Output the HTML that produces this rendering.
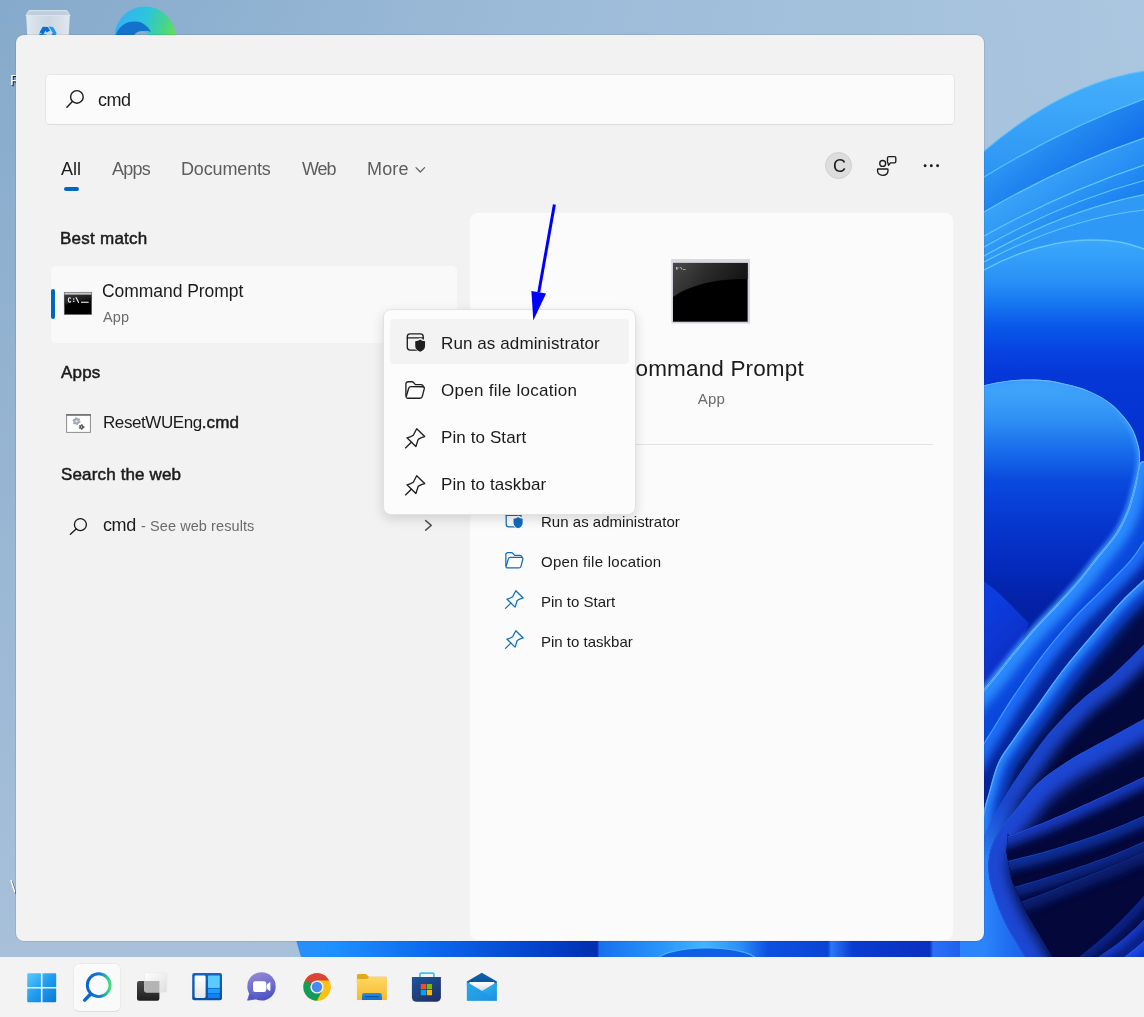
<!DOCTYPE html>
<html>
<head>
<meta charset="utf-8">
<title>Search</title>
<style>
html,body{margin:0;padding:0;}
body{width:1144px;height:1017px;overflow:hidden;position:relative;background:#a4bcd6;font-family:"Liberation Sans",sans-serif;}
.abs{position:absolute;}
svg{position:absolute;overflow:visible;}
.t{position:absolute;white-space:nowrap;line-height:1;color:#1b1b1b;will-change:transform;}
.sb{-webkit-text-stroke:0.5px #1b1b1b;}
#panel{position:absolute;left:16px;top:35px;width:968px;height:906px;background:#f2f2f2;border-radius:8px;box-shadow:0 0 0 1px rgba(0,0,0,0.08);}
#search{position:absolute;left:45.4px;top:74.4px;width:907.6px;height:48.4px;background:#fbfbfb;border:1px solid #e6e6e6;border-bottom-color:#dcdcdc;border-radius:5px;}
#sel{position:absolute;left:51px;top:266px;width:406px;height:77px;background:#f9f9f9;border-radius:5px;}
#rpane{position:absolute;left:470px;top:213px;width:483px;height:727.4px;background:#fbfbfb;border-radius:8px;}
#menu{position:absolute;left:383.2px;top:309px;width:251.2px;height:204.2px;background:#fcfcfc;border:1px solid #e2e2e2;border-radius:8px;box-shadow:0 4px 12px rgba(0,0,0,0.14);}
#hov{position:absolute;left:390px;top:319px;width:239.3px;height:44.8px;background:#f3f3f3;border-radius:4px;}
#taskbar{position:absolute;left:0;top:957px;width:1144px;height:60px;background:#f3f3f3;}
#sbtn{position:absolute;left:72.8px;top:962.5px;width:46.2px;height:47px;background:#fafafa;border:1px solid #ebebeb;border-bottom-color:#dedede;border-radius:6px;}

</style>
</head>
<body>
<svg id="wall" width="1144" height="957" viewBox="0 0 1144 957" style="left:0;top:0;overflow:hidden">
<defs>
<filter id="b1" filterUnits="userSpaceOnUse" x="900" y="0" width="300" height="1000"><feGaussianBlur stdDeviation="0.7"/></filter>
<filter id="b2" filterUnits="userSpaceOnUse" x="900" y="0" width="300" height="1000"><feGaussianBlur stdDeviation="2"/></filter>
<filter id="b3" filterUnits="userSpaceOnUse" x="900" y="0" width="300" height="1000"><feGaussianBlur stdDeviation="3"/></filter>
<filter id="b4" filterUnits="userSpaceOnUse" x="900" y="0" width="300" height="1000"><feGaussianBlur stdDeviation="4"/></filter>
<filter id="b5" filterUnits="userSpaceOnUse" x="900" y="0" width="300" height="1000"><feGaussianBlur stdDeviation="5"/></filter>
<filter id="b6" filterUnits="userSpaceOnUse" x="900" y="0" width="300" height="1000"><feGaussianBlur stdDeviation="6"/></filter>
<filter id="b7" filterUnits="userSpaceOnUse" x="900" y="0" width="300" height="1000"><feGaussianBlur stdDeviation="7"/></filter>
<filter id="b8" filterUnits="userSpaceOnUse" x="900" y="0" width="300" height="1000"><feGaussianBlur stdDeviation="8"/></filter>
<filter id="b9" filterUnits="userSpaceOnUse" x="900" y="0" width="300" height="1000"><feGaussianBlur stdDeviation="9"/></filter>
<filter id="b10" filterUnits="userSpaceOnUse" x="900" y="0" width="300" height="1000"><feGaussianBlur stdDeviation="10"/></filter>
<filter id="b11" filterUnits="userSpaceOnUse" x="900" y="0" width="300" height="1000"><feGaussianBlur stdDeviation="11"/></filter>
<filter id="b12" filterUnits="userSpaceOnUse" x="900" y="0" width="300" height="1000"><feGaussianBlur stdDeviation="12"/></filter>
<linearGradient id="bgH" x1="0" y1="0" x2="1" y2="0"><stop offset="0" stop-color="#86aacb"/><stop offset="0.5" stop-color="#9dbcd9"/><stop offset="1" stop-color="#abc6df"/></linearGradient>
<linearGradient id="bgV" x1="0" y1="0" x2="0" y2="1"><stop offset="0" stop-color="#a8c0da" stop-opacity="0"/><stop offset="1" stop-color="#a8c0da" stop-opacity="1"/></linearGradient>
<linearGradient id="strip" x1="297" y1="0" x2="1000" y2="0" gradientUnits="userSpaceOnUse">
<stop offset="0" stop-color="#2a8ef8"/><stop offset="0.05" stop-color="#1e90ff"/><stop offset="0.2" stop-color="#0a66ec"/><stop offset="0.37" stop-color="#033cc4"/><stop offset="0.427" stop-color="#022fae"/><stop offset="0.43" stop-color="#1670ee"/><stop offset="0.52" stop-color="#2a96fa"/><stop offset="0.58" stop-color="#42b4ff"/><stop offset="0.63" stop-color="#2c90f8"/><stop offset="0.67" stop-color="#0d50e0"/><stop offset="0.755" stop-color="#0a44d4"/><stop offset="0.76" stop-color="#2a78f8"/><stop offset="0.79" stop-color="#0a3cd0"/><stop offset="0.9" stop-color="#0a30c0"/><stop offset="0.905" stop-color="#2a70f8"/><stop offset="1" stop-color="#1448dc"/></linearGradient>
<linearGradient id="p1" x1="0" y1="70" x2="0" y2="180" gradientUnits="userSpaceOnUse"><stop offset="0" stop-color="#46b0fb"/><stop offset="1" stop-color="#2a94f4"/></linearGradient>
<linearGradient id="p2" x1="1040" y1="120" x2="1100" y2="200" gradientUnits="userSpaceOnUse"><stop offset="0" stop-color="#2f9cf6"/><stop offset="1" stop-color="#0a60e6"/></linearGradient>
<linearGradient id="p3" x1="1040" y1="160" x2="1090" y2="230" gradientUnits="userSpaceOnUse"><stop offset="0" stop-color="#3ca8f9"/><stop offset="1" stop-color="#1c82f0"/></linearGradient>
<linearGradient id="p4" x1="1040" y1="190" x2="1080" y2="245" gradientUnits="userSpaceOnUse"><stop offset="0" stop-color="#36a2f8"/><stop offset="1" stop-color="#167cf0"/></linearGradient>
<linearGradient id="p8" x1="0" y1="240" x2="0" y2="640" gradientUnits="userSpaceOnUse"><stop offset="0" stop-color="#3aa8fb"/><stop offset="0.1" stop-color="#2a92f6"/><stop offset="0.155" stop-color="#1878f2"/><stop offset="0.215" stop-color="#0a58ea"/><stop offset="0.275" stop-color="#0644e2"/><stop offset="0.33" stop-color="#0538d8"/><stop offset="0.6" stop-color="#042ec8"/><stop offset="1" stop-color="#0324b0"/></linearGradient>
<linearGradient id="p9" x1="0" y1="380" x2="0" y2="680" gradientUnits="userSpaceOnUse"><stop offset="0" stop-color="#42a8fb"/><stop offset="0.067" stop-color="#3a9ef8"/><stop offset="0.133" stop-color="#2e90f4"/><stop offset="0.2" stop-color="#1f78ee"/><stop offset="0.267" stop-color="#1462e8"/><stop offset="0.333" stop-color="#0a4ade"/><stop offset="0.467" stop-color="#0638d0"/><stop offset="0.6" stop-color="#042cc0"/><stop offset="0.733" stop-color="#0322a8"/><stop offset="1" stop-color="#021a90"/></linearGradient>
<linearGradient id="tri" x1="984" y1="600" x2="1030" y2="640" gradientUnits="userSpaceOnUse"><stop offset="0" stop-color="#0f3ee0"/><stop offset="1" stop-color="#0830c6"/></linearGradient>
<linearGradient id="lbH" x1="984" y1="0" x2="1030" y2="0" gradientUnits="userSpaceOnUse"><stop offset="0" stop-color="#2c84fb"/><stop offset="0.5" stop-color="#2070f2"/><stop offset="1" stop-color="#1a5ce8"/></linearGradient>
<linearGradient id="lbV" x1="0" y1="800" x2="0" y2="860" gradientUnits="userSpaceOnUse"><stop offset="0" stop-color="#000"/><stop offset="1" stop-color="#fff"/></linearGradient>
<mask id="lbM" maskUnits="userSpaceOnUse" x="960" y="790" width="120" height="200"><rect x="960" y="790" width="120" height="200" fill="url(#lbV)"/></mask>
</defs>
<rect width="1144" height="957" fill="url(#bgH)"/>
<rect width="1144" height="957" fill="url(#bgV)"/>
<path d="M296,940 L1144,940 L1144,957 L301,957 Z" fill="url(#strip)"/>
<ellipse cx="707" cy="961" rx="50" ry="13" fill="#0f5ee4"/>
<ellipse cx="707" cy="961" rx="50" ry="13" fill="none" stroke="#52bcff" stroke-width="1.2" opacity="0.8"/>
<g>
<path d="M970,163 L984,151 Q1064,83 1144,71 L1170,68 L1170,300 L970,300 Z" fill="url(#p1)" stroke="#62c4ff" stroke-width="1.2"/>
<path d="M970,185 L984,177 Q1064,128 1144,99 L1170,90 L1170,300 L970,300 Z" fill="url(#p2)" stroke="#5cc0ff" stroke-width="1.2"/>
<path d="M970,220 L984,212 Q1064,165 1144,138 L1170,130 L1170,300 L970,300 Z" fill="url(#p3)" stroke="#62c6ff" stroke-width="1.2"/>
<path d="M970,244 L984,236 Q1064,191.5 1144,165 L1170,157 L1170,300 L970,300 Z" fill="url(#p4)" stroke="#62c6ff" stroke-width="1.2"/>
<path d="M970,255 L984,247 Q1064,201.7 1144,180.5 L1170,174 L1170,300 L970,300 Z" fill="url(#p4)" stroke="#62c6ff" stroke-width="1.2"/>
<path d="M970,264 L984,256 Q1064,210.6 1144,194.7 L1170,190 L1170,300 L970,300 Z" fill="#2f9af6" stroke="#62c6ff" stroke-width="1.2"/>
<path d="M970,270 L984,262 Q1064,219.4 1144,210 L1170,207 L1170,300 L970,300 Z" fill="#2e98f6" stroke="#62c6ff" stroke-width="1.2"/>
<path d="M965,282 L984,270 C1020,250 1060,240 1090,240 S1130,244 1144,249 L1170,258 L1170,720 L965,720 Z" fill="url(#p8)" stroke="#66c8ff" stroke-width="1.4"/>
</g>
<path d="M960,640 L1170,500 L1170,980 L960,980 Z" fill="#03083a"/>
<clipPath id="c1"><path d="M1185.0,446.0 C1181.2,447.7 1168.2,453.5 1162.0,456.0 C1155.8,458.5 1151.7,459.7 1148.0,461.0 C1144.3,462.3 1142.0,459.3 1139.8,463.6 C1137.6,467.9 1137.0,479.1 1135.0,487.0 C1133.0,494.9 1131.2,502.9 1128.0,510.8 C1124.8,518.7 1121.2,526.5 1116.0,534.4 C1110.8,542.3 1103.3,550.1 1097.0,558.0 C1090.7,565.9 1085.1,573.7 1078.4,581.6 C1071.7,589.5 1064.3,597.3 1057.0,605.2 C1049.7,613.1 1041.8,620.9 1034.7,628.8 C1027.7,636.7 1021.2,644.5 1014.7,652.4 C1008.2,660.3 1000.9,669.7 995.8,676.0 C990.7,682.3 989.1,684.0 984.0,690.0 C978.9,696.0 968.2,708.3 965.0,712.0 L960,980 L1165,980 Z"/></clipPath>
<g clip-path="url(#c1)">
<path d="M1185.0,446.0 C1181.2,447.7 1168.2,453.5 1162.0,456.0 C1155.8,458.5 1151.7,459.7 1148.0,461.0 C1144.3,462.3 1142.0,459.3 1139.8,463.6 C1137.6,467.9 1137.0,479.1 1135.0,487.0 C1133.0,494.9 1131.2,502.9 1128.0,510.8 C1124.8,518.7 1121.2,526.5 1116.0,534.4 C1110.8,542.3 1103.3,550.1 1097.0,558.0 C1090.7,565.9 1085.1,573.7 1078.4,581.6 C1071.7,589.5 1064.3,597.3 1057.0,605.2 C1049.7,613.1 1041.8,620.9 1034.7,628.8 C1027.7,636.7 1021.2,644.5 1014.7,652.4 C1008.2,660.3 1000.9,669.7 995.8,676.0 C990.7,682.3 989.1,684.0 984.0,690.0 C978.9,696.0 968.2,708.3 965.0,712.0 L960,980 L1165,980 Z" fill="#0a48dc"/>
<path d="M1185.0,446.0 C1181.2,447.7 1168.2,453.5 1162.0,456.0 C1155.8,458.5 1151.7,459.7 1148.0,461.0 C1144.3,462.3 1142.0,459.3 1139.8,463.6 C1137.6,467.9 1137.0,479.1 1135.0,487.0 C1133.0,494.9 1131.2,502.9 1128.0,510.8 C1124.8,518.7 1121.2,526.5 1116.0,534.4 C1110.8,542.3 1103.3,550.1 1097.0,558.0 C1090.7,565.9 1085.1,573.7 1078.4,581.6 C1071.7,589.5 1064.3,597.3 1057.0,605.2 C1049.7,613.1 1041.8,620.9 1034.7,628.8 C1027.7,636.7 1021.2,644.5 1014.7,652.4 C1008.2,660.3 1000.9,669.7 995.8,676.0 C990.7,682.3 989.1,684.0 984.0,690.0 C978.9,696.0 968.2,708.3 965.0,712.0" fill="none" stroke="#2a8aff" stroke-width="24" opacity="1" filter="url(#b5)"/>
<path d="M1185.0,446.0 C1181.2,447.7 1168.2,453.5 1162.0,456.0 C1155.8,458.5 1151.7,459.7 1148.0,461.0 C1144.3,462.3 1142.0,459.3 1139.8,463.6 C1137.6,467.9 1137.0,479.1 1135.0,487.0 C1133.0,494.9 1131.2,502.9 1128.0,510.8 C1124.8,518.7 1121.2,526.5 1116.0,534.4 C1110.8,542.3 1103.3,550.1 1097.0,558.0 C1090.7,565.9 1085.1,573.7 1078.4,581.6 C1071.7,589.5 1064.3,597.3 1057.0,605.2 C1049.7,613.1 1041.8,620.9 1034.7,628.8 C1027.7,636.7 1021.2,644.5 1014.7,652.4 C1008.2,660.3 1000.9,669.7 995.8,676.0 C990.7,682.3 989.1,684.0 984.0,690.0 C978.9,696.0 968.2,708.3 965.0,712.0" fill="none" stroke="#62b8ff" stroke-width="2.2" opacity="1"/>
</g>
<clipPath id="c2"><path d="M1175.0,505.0 C1172.5,508.0 1165.2,517.0 1160.0,523.0 C1154.8,529.0 1148.9,534.8 1144.0,541.0 C1139.1,547.2 1137.4,551.9 1130.4,560.0 C1123.4,568.1 1111.6,579.7 1101.9,589.5 C1092.2,599.3 1082.2,608.2 1072.4,619.0 C1062.6,629.8 1052.8,641.2 1043.0,654.0 C1033.2,666.8 1021.7,683.4 1013.5,695.6 C1005.3,707.8 998.7,719.1 993.8,727.0 C988.9,734.9 988.0,735.9 984.0,742.7 C980.0,749.5 972.3,763.8 970.0,768.0 L960,980 L1165,980 Z"/></clipPath>
<g clip-path="url(#c2)">
<path d="M1175.0,505.0 C1172.5,508.0 1165.2,517.0 1160.0,523.0 C1154.8,529.0 1148.9,534.8 1144.0,541.0 C1139.1,547.2 1137.4,551.9 1130.4,560.0 C1123.4,568.1 1111.6,579.7 1101.9,589.5 C1092.2,599.3 1082.2,608.2 1072.4,619.0 C1062.6,629.8 1052.8,641.2 1043.0,654.0 C1033.2,666.8 1021.7,683.4 1013.5,695.6 C1005.3,707.8 998.7,719.1 993.8,727.0 C988.9,734.9 988.0,735.9 984.0,742.7 C980.0,749.5 972.3,763.8 970.0,768.0 L960,980 L1165,980 Z" fill="#06249c"/>
<path d="M1175.0,505.0 C1172.5,508.0 1165.2,517.0 1160.0,523.0 C1154.8,529.0 1148.9,534.8 1144.0,541.0 C1139.1,547.2 1137.4,551.9 1130.4,560.0 C1123.4,568.1 1111.6,579.7 1101.9,589.5 C1092.2,599.3 1082.2,608.2 1072.4,619.0 C1062.6,629.8 1052.8,641.2 1043.0,654.0 C1033.2,666.8 1021.7,683.4 1013.5,695.6 C1005.3,707.8 998.7,719.1 993.8,727.0 C988.9,734.9 988.0,735.9 984.0,742.7 C980.0,749.5 972.3,763.8 970.0,768.0" fill="none" stroke="#1a6cf8" stroke-width="24" opacity="1" filter="url(#b5)"/>
<path d="M1175.0,505.0 C1172.5,508.0 1165.2,517.0 1160.0,523.0 C1154.8,529.0 1148.9,534.8 1144.0,541.0 C1139.1,547.2 1137.4,551.9 1130.4,560.0 C1123.4,568.1 1111.6,579.7 1101.9,589.5 C1092.2,599.3 1082.2,608.2 1072.4,619.0 C1062.6,629.8 1052.8,641.2 1043.0,654.0 C1033.2,666.8 1021.7,683.4 1013.5,695.6 C1005.3,707.8 998.7,719.1 993.8,727.0 C988.9,734.9 988.0,735.9 984.0,742.7 C980.0,749.5 972.3,763.8 970.0,768.0" fill="none" stroke="#3e9cff" stroke-width="2.2" opacity="1"/>
</g>
<clipPath id="c3"><path d="M1175.0,552.0 C1172.5,554.2 1165.2,560.4 1160.0,565.0 C1154.8,569.6 1150.4,573.6 1144.0,579.6 C1137.6,585.6 1130.2,591.8 1121.5,601.0 C1112.8,610.2 1101.8,623.2 1092.0,634.7 C1082.2,646.2 1072.4,657.2 1062.6,670.0 C1052.8,682.8 1041.4,699.5 1033.0,711.3 C1024.6,723.1 1017.8,732.4 1012.0,741.0 C1006.2,749.6 1001.8,754.5 998.0,763.0 C994.2,771.5 991.3,784.0 989.0,792.0 C986.7,800.0 985.5,803.0 984.0,811.0 C982.5,819.0 981.0,828.5 980.0,840.0 C979.0,851.5 978.3,865.0 978.0,880.0 C977.7,895.0 977.7,912.5 978.0,930.0 C978.3,947.5 979.7,975.8 980.0,985.0 L960,980 L1165,980 Z"/></clipPath>
<g clip-path="url(#c3)">
<path d="M1175.0,552.0 C1172.5,554.2 1165.2,560.4 1160.0,565.0 C1154.8,569.6 1150.4,573.6 1144.0,579.6 C1137.6,585.6 1130.2,591.8 1121.5,601.0 C1112.8,610.2 1101.8,623.2 1092.0,634.7 C1082.2,646.2 1072.4,657.2 1062.6,670.0 C1052.8,682.8 1041.4,699.5 1033.0,711.3 C1024.6,723.1 1017.8,732.4 1012.0,741.0 C1006.2,749.6 1001.8,754.5 998.0,763.0 C994.2,771.5 991.3,784.0 989.0,792.0 C986.7,800.0 985.5,803.0 984.0,811.0 C982.5,819.0 981.0,828.5 980.0,840.0 C979.0,851.5 978.3,865.0 978.0,880.0 C977.7,895.0 977.7,912.5 978.0,930.0 C978.3,947.5 979.7,975.8 980.0,985.0 L960,980 L1165,980 Z" fill="#030a44"/>
<path d="M1175.0,552.0 C1172.5,554.2 1165.2,560.4 1160.0,565.0 C1154.8,569.6 1150.4,573.6 1144.0,579.6 C1137.6,585.6 1130.2,591.8 1121.5,601.0 C1112.8,610.2 1101.8,623.2 1092.0,634.7 C1082.2,646.2 1072.4,657.2 1062.6,670.0 C1052.8,682.8 1041.4,699.5 1033.0,711.3 C1024.6,723.1 1017.8,732.4 1012.0,741.0 C1006.2,749.6 1001.8,754.5 998.0,763.0 C994.2,771.5 991.3,784.0 989.0,792.0 C986.7,800.0 985.5,803.0 984.0,811.0 C982.5,819.0 981.0,828.5 980.0,840.0 C979.0,851.5 978.3,865.0 978.0,880.0 C977.7,895.0 977.7,912.5 978.0,930.0 C978.3,947.5 979.7,975.8 980.0,985.0" fill="none" stroke="#1046d6" stroke-width="36" opacity="1" filter="url(#b6)"/>
<path d="M1175.0,552.0 C1172.5,554.2 1165.2,560.4 1160.0,565.0 C1154.8,569.6 1150.4,573.6 1144.0,579.6 C1137.6,585.6 1130.2,591.8 1121.5,601.0 C1112.8,610.2 1101.8,623.2 1092.0,634.7 C1082.2,646.2 1072.4,657.2 1062.6,670.0 C1052.8,682.8 1041.4,699.5 1033.0,711.3 C1024.6,723.1 1017.8,732.4 1012.0,741.0 C1006.2,749.6 1001.8,754.5 998.0,763.0 C994.2,771.5 991.3,784.0 989.0,792.0 C986.7,800.0 985.5,803.0 984.0,811.0 C982.5,819.0 981.0,828.5 980.0,840.0 C979.0,851.5 978.3,865.0 978.0,880.0 C977.7,895.0 977.7,912.5 978.0,930.0 C978.3,947.5 979.7,975.8 980.0,985.0" fill="none" stroke="#2a84fc" stroke-width="13" opacity="1" filter="url(#b3)"/>
<path d="M1175.0,552.0 C1172.5,554.2 1165.2,560.4 1160.0,565.0 C1154.8,569.6 1150.4,573.6 1144.0,579.6 C1137.6,585.6 1130.2,591.8 1121.5,601.0 C1112.8,610.2 1101.8,623.2 1092.0,634.7 C1082.2,646.2 1072.4,657.2 1062.6,670.0 C1052.8,682.8 1041.4,699.5 1033.0,711.3 C1024.6,723.1 1017.8,732.4 1012.0,741.0 C1006.2,749.6 1001.8,754.5 998.0,763.0 C994.2,771.5 991.3,784.0 989.0,792.0 C986.7,800.0 985.5,803.0 984.0,811.0 C982.5,819.0 981.0,828.5 980.0,840.0 C979.0,851.5 978.3,865.0 978.0,880.0 C977.7,895.0 977.7,912.5 978.0,930.0 C978.3,947.5 979.7,975.8 980.0,985.0" fill="none" stroke="#52acff" stroke-width="2.6" opacity="1"/>
</g>
<clipPath id="c4"><path d="M1175.0,615.0 C1172.5,617.5 1165.2,625.1 1160.0,630.0 C1154.8,634.9 1152.0,636.8 1144.0,644.5 C1136.0,652.2 1122.0,666.8 1111.7,676.0 C1101.4,685.2 1091.8,690.7 1082.0,699.5 C1072.2,708.3 1061.0,719.8 1052.8,729.0 C1044.6,738.2 1039.8,745.2 1033.0,754.5 C1026.2,763.8 1018.2,775.4 1012.0,785.0 C1005.8,794.6 1000.3,804.2 996.0,812.0 C991.7,819.8 989.3,825.3 986.0,832.0 C982.7,838.7 979.3,844.8 976.0,852.0 C972.7,859.2 967.7,871.2 966.0,875.0 L960,980 L1165,980 Z"/></clipPath>
<g clip-path="url(#c4)">
<path d="M1175.0,615.0 C1172.5,617.5 1165.2,625.1 1160.0,630.0 C1154.8,634.9 1152.0,636.8 1144.0,644.5 C1136.0,652.2 1122.0,666.8 1111.7,676.0 C1101.4,685.2 1091.8,690.7 1082.0,699.5 C1072.2,708.3 1061.0,719.8 1052.8,729.0 C1044.6,738.2 1039.8,745.2 1033.0,754.5 C1026.2,763.8 1018.2,775.4 1012.0,785.0 C1005.8,794.6 1000.3,804.2 996.0,812.0 C991.7,819.8 989.3,825.3 986.0,832.0 C982.7,838.7 979.3,844.8 976.0,852.0 C972.7,859.2 967.7,871.2 966.0,875.0 L960,980 L1165,980 Z" fill="#03083a"/>
<path d="M1175.0,615.0 C1172.5,617.5 1165.2,625.1 1160.0,630.0 C1154.8,634.9 1152.0,636.8 1144.0,644.5 C1136.0,652.2 1122.0,666.8 1111.7,676.0 C1101.4,685.2 1091.8,690.7 1082.0,699.5 C1072.2,708.3 1061.0,719.8 1052.8,729.0 C1044.6,738.2 1039.8,745.2 1033.0,754.5 C1026.2,763.8 1018.2,775.4 1012.0,785.0 C1005.8,794.6 1000.3,804.2 996.0,812.0 C991.7,819.8 989.3,825.3 986.0,832.0 C982.7,838.7 979.3,844.8 976.0,852.0 C972.7,859.2 967.7,871.2 966.0,875.0" fill="none" stroke="#1a48d4" stroke-width="32" opacity="0.95" filter="url(#b6)"/>
<path d="M1175.0,615.0 C1172.5,617.5 1165.2,625.1 1160.0,630.0 C1154.8,634.9 1152.0,636.8 1144.0,644.5 C1136.0,652.2 1122.0,666.8 1111.7,676.0 C1101.4,685.2 1091.8,690.7 1082.0,699.5 C1072.2,708.3 1061.0,719.8 1052.8,729.0 C1044.6,738.2 1039.8,745.2 1033.0,754.5 C1026.2,763.8 1018.2,775.4 1012.0,785.0 C1005.8,794.6 1000.3,804.2 996.0,812.0 C991.7,819.8 989.3,825.3 986.0,832.0 C982.7,838.7 979.3,844.8 976.0,852.0 C972.7,859.2 967.7,871.2 966.0,875.0" fill="none" stroke="#2050d8" stroke-width="1.6" opacity="0.7"/>
</g>
<rect x="960" y="790" width="100" height="200" fill="url(#lbH)" mask="url(#lbM)"/>
<clipPath id="c5"><path d="M1175.0,706.0 C1172.5,707.0 1165.2,709.8 1160.0,712.0 C1154.8,714.2 1152.0,714.9 1144.0,719.0 C1136.0,723.1 1124.0,730.0 1111.7,736.8 C1099.5,743.5 1082.8,751.8 1070.5,759.5 C1058.2,767.2 1047.0,774.8 1038.0,783.0 C1029.0,791.2 1022.7,801.2 1016.4,809.0 C1010.1,816.8 1004.3,823.2 1000.0,830.0 C995.7,836.8 992.4,843.3 990.5,850.0 C988.6,856.7 988.1,863.2 988.5,870.0 C988.9,876.8 989.8,882.0 992.6,891.0 C995.5,900.0 1000.2,912.8 1005.6,923.8 C1011.0,934.8 1019.9,947.6 1025.0,957.0 C1030.1,966.4 1034.2,976.2 1036.0,980.0 L1036,985 L1170,985 Z"/></clipPath>
<g clip-path="url(#c5)">
<path d="M1175.0,706.0 C1172.5,707.0 1165.2,709.8 1160.0,712.0 C1154.8,714.2 1152.0,714.9 1144.0,719.0 C1136.0,723.1 1124.0,730.0 1111.7,736.8 C1099.5,743.5 1082.8,751.8 1070.5,759.5 C1058.2,767.2 1047.0,774.8 1038.0,783.0 C1029.0,791.2 1022.7,801.2 1016.4,809.0 C1010.1,816.8 1004.3,823.2 1000.0,830.0 C995.7,836.8 992.4,843.3 990.5,850.0 C988.6,856.7 988.1,863.2 988.5,870.0 C988.9,876.8 989.8,882.0 992.6,891.0 C995.5,900.0 1000.2,912.8 1005.6,923.8 C1011.0,934.8 1019.9,947.6 1025.0,957.0 C1030.1,966.4 1034.2,976.2 1036.0,980.0 L1036,985 L1170,985 Z" fill="#03083a"/>
<path d="M1175.0,706.0 C1172.5,707.0 1165.2,709.8 1160.0,712.0 C1154.8,714.2 1152.0,714.9 1144.0,719.0 C1136.0,723.1 1124.0,730.0 1111.7,736.8 C1099.5,743.5 1082.8,751.8 1070.5,759.5 C1058.2,767.2 1047.0,774.8 1038.0,783.0 C1029.0,791.2 1022.7,801.2 1016.4,809.0 C1010.1,816.8 1004.3,823.2 1000.0,830.0 C995.7,836.8 992.4,843.3 990.5,850.0 C988.6,856.7 988.1,863.2 988.5,870.0 C988.9,876.8 989.8,882.0 992.6,891.0 C995.5,900.0 1000.2,912.8 1005.6,923.8 C1011.0,934.8 1019.9,947.6 1025.0,957.0 C1030.1,966.4 1034.2,976.2 1036.0,980.0" fill="none" stroke="#1c46d4" stroke-width="40" opacity="1" filter="url(#b7)"/>
<path d="M1175.0,706.0 C1172.5,707.0 1165.2,709.8 1160.0,712.0 C1154.8,714.2 1152.0,714.9 1144.0,719.0 C1136.0,723.1 1124.0,730.0 1111.7,736.8 C1099.5,743.5 1082.8,751.8 1070.5,759.5 C1058.2,767.2 1047.0,774.8 1038.0,783.0 C1029.0,791.2 1022.7,801.2 1016.4,809.0 C1010.1,816.8 1004.3,823.2 1000.0,830.0 C995.7,836.8 992.4,843.3 990.5,850.0 C988.6,856.7 988.1,863.2 988.5,870.0 C988.9,876.8 989.8,882.0 992.6,891.0 C995.5,900.0 1000.2,912.8 1005.6,923.8 C1011.0,934.8 1019.9,947.6 1025.0,957.0 C1030.1,966.4 1034.2,976.2 1036.0,980.0" fill="none" stroke="#2858e0" stroke-width="1.6" opacity="0.7"/>
</g>
<path d="M1008.9,836.0 C1014.1,834.0 1029.7,828.2 1040.0,824.0 C1050.3,819.8 1058.8,816.2 1070.5,811.0 C1082.2,805.8 1097.8,798.7 1110.0,793.0 C1122.2,787.3 1133.2,782.0 1144.0,776.8 C1154.8,771.6 1169.8,764.5 1175.0,762.0 L1175,985 L1068,985 L1068.0,982.0 L1053.0,957.0 L1027.0,913.0 L1012.0,880.5 L1006.4,852.4 L1007.8,833.0 Z" fill="#03073a"/>
<clipPath id="ovl"><path d="M1007.8,820 L1175,740 L1175,985 L1068,985 L1068.0,982.0 L1053.0,957.0 L1027.0,913.0 L1012.0,880.5 L1006.4,852.4 L1007.8,833.0 Z"/></clipPath>
<g clip-path="url(#ovl)">
<clipPath id="c6"><path d="M1000.0,839.5 C1001.5,838.9 1002.2,838.6 1008.9,836.0 C1015.6,833.4 1029.7,828.2 1040.0,824.0 C1050.3,819.8 1058.8,816.2 1070.5,811.0 C1082.2,805.8 1097.8,798.7 1110.0,793.0 C1122.2,787.3 1133.2,782.0 1144.0,776.8 C1154.8,771.6 1169.8,764.5 1175.0,762.0 L1175,985 L1000,985 Z"/></clipPath>
<g clip-path="url(#c6)">
<path d="M1000.0,839.5 C1001.5,838.9 1002.2,838.6 1008.9,836.0 C1015.6,833.4 1029.7,828.2 1040.0,824.0 C1050.3,819.8 1058.8,816.2 1070.5,811.0 C1082.2,805.8 1097.8,798.7 1110.0,793.0 C1122.2,787.3 1133.2,782.0 1144.0,776.8 C1154.8,771.6 1169.8,764.5 1175.0,762.0 L1175,985 L1000,985 Z" fill="#03073a"/>
<path d="M1000.0,839.5 C1001.5,838.9 1002.2,838.6 1008.9,836.0 C1015.6,833.4 1029.7,828.2 1040.0,824.0 C1050.3,819.8 1058.8,816.2 1070.5,811.0 C1082.2,805.8 1097.8,798.7 1110.0,793.0 C1122.2,787.3 1133.2,782.0 1144.0,776.8 C1154.8,771.6 1169.8,764.5 1175.0,762.0" fill="none" stroke="#1438b8" stroke-width="20" opacity="1" filter="url(#b4)"/>
<path d="M1000.0,839.5 C1001.5,838.9 1002.2,838.6 1008.9,836.0 C1015.6,833.4 1029.7,828.2 1040.0,824.0 C1050.3,819.8 1058.8,816.2 1070.5,811.0 C1082.2,805.8 1097.8,798.7 1110.0,793.0 C1122.2,787.3 1133.2,782.0 1144.0,776.8 C1154.8,771.6 1169.8,764.5 1175.0,762.0" fill="none" stroke="#2250dc" stroke-width="1.6" opacity="0.9"/>
</g>
<clipPath id="c7"><path d="M1000.0,863.0 C1001.3,862.7 1001.1,862.7 1007.8,861.0 C1014.5,859.3 1029.5,855.9 1040.0,853.0 C1050.5,850.1 1058.8,847.6 1070.5,843.8 C1082.2,840.0 1097.8,834.7 1110.0,830.0 C1122.2,825.3 1133.2,820.5 1144.0,815.7 C1154.8,810.9 1169.8,803.5 1175.0,801.0 L1175,985 L1000,985 Z"/></clipPath>
<g clip-path="url(#c7)">
<path d="M1000.0,863.0 C1001.3,862.7 1001.1,862.7 1007.8,861.0 C1014.5,859.3 1029.5,855.9 1040.0,853.0 C1050.5,850.1 1058.8,847.6 1070.5,843.8 C1082.2,840.0 1097.8,834.7 1110.0,830.0 C1122.2,825.3 1133.2,820.5 1144.0,815.7 C1154.8,810.9 1169.8,803.5 1175.0,801.0 L1175,985 L1000,985 Z" fill="#03073a"/>
<path d="M1000.0,863.0 C1001.3,862.7 1001.1,862.7 1007.8,861.0 C1014.5,859.3 1029.5,855.9 1040.0,853.0 C1050.5,850.1 1058.8,847.6 1070.5,843.8 C1082.2,840.0 1097.8,834.7 1110.0,830.0 C1122.2,825.3 1133.2,820.5 1144.0,815.7 C1154.8,810.9 1169.8,803.5 1175.0,801.0" fill="none" stroke="#10309c" stroke-width="20" opacity="0.95" filter="url(#b4)"/>
<path d="M1000.0,863.0 C1001.3,862.7 1001.1,862.7 1007.8,861.0 C1014.5,859.3 1029.5,855.9 1040.0,853.0 C1050.5,850.1 1058.8,847.6 1070.5,843.8 C1082.2,840.0 1097.8,834.7 1110.0,830.0 C1122.2,825.3 1133.2,820.5 1144.0,815.7 C1154.8,810.9 1169.8,803.5 1175.0,801.0" fill="none" stroke="#1a44c4" stroke-width="1.6" opacity="0.9"/>
</g>
<clipPath id="c8"><path d="M1000.0,890.5 C1002.4,889.9 1007.6,888.8 1014.3,887.0 C1021.0,885.2 1030.6,882.4 1040.0,879.5 C1049.4,876.6 1058.8,873.6 1070.5,869.7 C1082.2,865.8 1097.8,860.7 1110.0,856.0 C1122.2,851.3 1133.2,846.4 1144.0,841.6 C1154.8,836.8 1169.8,829.4 1175.0,827.0 L1175,985 L1000,985 Z"/></clipPath>
<g clip-path="url(#c8)">
<path d="M1000.0,890.5 C1002.4,889.9 1007.6,888.8 1014.3,887.0 C1021.0,885.2 1030.6,882.4 1040.0,879.5 C1049.4,876.6 1058.8,873.6 1070.5,869.7 C1082.2,865.8 1097.8,860.7 1110.0,856.0 C1122.2,851.3 1133.2,846.4 1144.0,841.6 C1154.8,836.8 1169.8,829.4 1175.0,827.0 L1175,985 L1000,985 Z" fill="#03073a"/>
<path d="M1000.0,890.5 C1002.4,889.9 1007.6,888.8 1014.3,887.0 C1021.0,885.2 1030.6,882.4 1040.0,879.5 C1049.4,876.6 1058.8,873.6 1070.5,869.7 C1082.2,865.8 1097.8,860.7 1110.0,856.0 C1122.2,851.3 1133.2,846.4 1144.0,841.6 C1154.8,836.8 1169.8,829.4 1175.0,827.0" fill="none" stroke="#0e2a8c" stroke-width="20" opacity="0.9" filter="url(#b4)"/>
<path d="M1000.0,890.5 C1002.4,889.9 1007.6,888.8 1014.3,887.0 C1021.0,885.2 1030.6,882.4 1040.0,879.5 C1049.4,876.6 1058.8,873.6 1070.5,869.7 C1082.2,865.8 1097.8,860.7 1110.0,856.0 C1122.2,851.3 1133.2,846.4 1144.0,841.6 C1154.8,836.8 1169.8,829.4 1175.0,827.0" fill="none" stroke="#163cb0" stroke-width="1.6" opacity="0.9"/>
</g>
<clipPath id="c9"><path d="M1005.0,906.5 C1007.6,905.8 1014.1,904.2 1020.8,902.0 C1027.5,899.8 1036.7,896.2 1045.0,893.0 C1053.3,889.8 1059.7,887.0 1070.5,882.7 C1081.3,878.4 1097.8,872.0 1110.0,867.0 C1122.2,862.0 1133.2,857.2 1144.0,852.4 C1154.8,847.6 1169.8,840.4 1175.0,838.0 L1175,985 L1000,985 Z"/></clipPath>
<g clip-path="url(#c9)">
<path d="M1005.0,906.5 C1007.6,905.8 1014.1,904.2 1020.8,902.0 C1027.5,899.8 1036.7,896.2 1045.0,893.0 C1053.3,889.8 1059.7,887.0 1070.5,882.7 C1081.3,878.4 1097.8,872.0 1110.0,867.0 C1122.2,862.0 1133.2,857.2 1144.0,852.4 C1154.8,847.6 1169.8,840.4 1175.0,838.0 L1175,985 L1000,985 Z" fill="#03073a"/>
<path d="M1005.0,906.5 C1007.6,905.8 1014.1,904.2 1020.8,902.0 C1027.5,899.8 1036.7,896.2 1045.0,893.0 C1053.3,889.8 1059.7,887.0 1070.5,882.7 C1081.3,878.4 1097.8,872.0 1110.0,867.0 C1122.2,862.0 1133.2,857.2 1144.0,852.4 C1154.8,847.6 1169.8,840.4 1175.0,838.0" fill="none" stroke="#0b2278" stroke-width="20" opacity="0.85" filter="url(#b4)"/>
<path d="M1005.0,906.5 C1007.6,905.8 1014.1,904.2 1020.8,902.0 C1027.5,899.8 1036.7,896.2 1045.0,893.0 C1053.3,889.8 1059.7,887.0 1070.5,882.7 C1081.3,878.4 1097.8,872.0 1110.0,867.0 C1122.2,862.0 1133.2,857.2 1144.0,852.4 C1154.8,847.6 1169.8,840.4 1175.0,838.0" fill="none" stroke="#12309a" stroke-width="1.6" opacity="0.9"/>
</g>
<clipPath id="c10"><path d="M1175.0,858.0 C1169.8,864.3 1154.5,883.9 1144.0,895.7 C1133.5,907.5 1122.8,918.8 1112.0,929.0 C1101.2,939.2 1089.3,948.5 1079.0,957.0 C1068.7,965.5 1054.8,976.2 1050.0,980.0 L1050,985 L1175,985 Z"/></clipPath>
<g clip-path="url(#c10)">
<path d="M1175.0,858.0 C1169.8,864.3 1154.5,883.9 1144.0,895.7 C1133.5,907.5 1122.8,918.8 1112.0,929.0 C1101.2,939.2 1089.3,948.5 1079.0,957.0 C1068.7,965.5 1054.8,976.2 1050.0,980.0 L1050,985 L1175,985 Z" fill="#050e4c"/>
<path d="M1175.0,858.0 C1169.8,864.3 1154.5,883.9 1144.0,895.7 C1133.5,907.5 1122.8,918.8 1112.0,929.0 C1101.2,939.2 1089.3,948.5 1079.0,957.0 C1068.7,965.5 1054.8,976.2 1050.0,980.0" fill="none" stroke="#0c2890" stroke-width="16" opacity="0.9" filter="url(#b4)"/>
</g>
<clipPath id="c11"><path d="M1175.0,885.0 C1169.8,890.8 1152.8,910.3 1144.0,919.5 C1135.2,928.7 1129.6,933.8 1122.0,940.0 C1114.4,946.2 1107.3,950.7 1098.6,957.0 C1089.9,963.3 1074.8,974.5 1070.0,978.0 L1070,985 L1175,985 Z"/></clipPath>
<g clip-path="url(#c11)">
<path d="M1175.0,885.0 C1169.8,890.8 1152.8,910.3 1144.0,919.5 C1135.2,928.7 1129.6,933.8 1122.0,940.0 C1114.4,946.2 1107.3,950.7 1098.6,957.0 C1089.9,963.3 1074.8,974.5 1070.0,978.0 L1070,985 L1175,985 Z" fill="#0a2088"/>
<path d="M1175.0,885.0 C1169.8,890.8 1152.8,910.3 1144.0,919.5 C1135.2,928.7 1129.6,933.8 1122.0,940.0 C1114.4,946.2 1107.3,950.7 1098.6,957.0 C1089.9,963.3 1074.8,974.5 1070.0,978.0" fill="none" stroke="#1238c0" stroke-width="12" opacity="1" filter="url(#b3)"/>
<path d="M1175.0,885.0 C1169.8,890.8 1152.8,910.3 1144.0,919.5 C1135.2,928.7 1129.6,933.8 1122.0,940.0 C1114.4,946.2 1107.3,950.7 1098.6,957.0 C1089.9,963.3 1074.8,974.5 1070.0,978.0" fill="none" stroke="#1a44d0" stroke-width="1.4" opacity="0.8"/>
</g>
<clipPath id="c12"><path d="M1175.0,915.0 C1169.8,919.3 1152.4,934.0 1144.0,941.0 C1135.6,948.0 1131.8,951.3 1124.5,957.0 C1117.2,962.7 1104.1,972.0 1100.0,975.0 L1100,985 L1175,985 Z"/></clipPath>
<g clip-path="url(#c12)">
<path d="M1175.0,915.0 C1169.8,919.3 1152.4,934.0 1144.0,941.0 C1135.6,948.0 1131.8,951.3 1124.5,957.0 C1117.2,962.7 1104.1,972.0 1100.0,975.0 L1100,985 L1175,985 Z" fill="#1238c8"/>
<path d="M1175.0,915.0 C1169.8,919.3 1152.4,934.0 1144.0,941.0 C1135.6,948.0 1131.8,951.3 1124.5,957.0 C1117.2,962.7 1104.1,972.0 1100.0,975.0" fill="none" stroke="#1c4ce4" stroke-width="10" opacity="1" filter="url(#b3)"/>
<path d="M1175.0,915.0 C1169.8,919.3 1152.4,934.0 1144.0,941.0 C1135.6,948.0 1131.8,951.3 1124.5,957.0 C1117.2,962.7 1104.1,972.0 1100.0,975.0" fill="none" stroke="#2a5cf0" stroke-width="1.4" opacity="0.8"/>
</g>
</g>
<clipPath id="cp9"><path d="M955.0,392.0 C959.8,390.9 974.5,387.2 984.0,385.2 C993.5,383.2 1002.2,381.1 1012.0,380.2 C1021.8,379.3 1034.0,379.4 1043.0,380.0 C1052.0,380.6 1058.5,382.2 1066.0,384.0 C1073.5,385.8 1080.2,387.2 1087.8,390.5 C1095.4,393.8 1104.3,398.2 1111.4,404.0 C1118.5,409.8 1125.8,418.3 1130.3,425.3 C1134.8,432.3 1137.0,439.6 1138.6,446.0 C1140.2,452.4 1140.4,456.8 1139.8,463.6 C1139.2,470.4 1137.0,479.1 1135.0,487.0 C1133.0,494.9 1131.2,502.9 1128.0,510.8 C1124.8,518.7 1121.2,526.5 1116.0,534.4 C1110.8,542.3 1103.3,550.1 1097.0,558.0 C1090.7,565.9 1085.1,573.7 1078.4,581.6 C1071.7,589.5 1064.3,597.3 1057.0,605.2 C1049.7,613.1 1041.8,620.9 1034.7,628.8 C1027.7,636.7 1021.2,644.5 1014.7,652.4 C1008.2,660.3 1000.9,669.7 995.8,676.0 C990.7,682.3 989.1,684.0 984.0,690.0 C978.9,696.0 968.2,708.3 965.0,712.0 L955,712 Z"/></clipPath>
<g clip-path="url(#cp9)">
<path d="M955.0,392.0 C959.8,390.9 974.5,387.2 984.0,385.2 C993.5,383.2 1002.2,381.1 1012.0,380.2 C1021.8,379.3 1034.0,379.4 1043.0,380.0 C1052.0,380.6 1058.5,382.2 1066.0,384.0 C1073.5,385.8 1080.2,387.2 1087.8,390.5 C1095.4,393.8 1104.3,398.2 1111.4,404.0 C1118.5,409.8 1125.8,418.3 1130.3,425.3 C1134.8,432.3 1137.0,439.6 1138.6,446.0 C1140.2,452.4 1140.4,456.8 1139.8,463.6 C1139.2,470.4 1137.0,479.1 1135.0,487.0 C1133.0,494.9 1131.2,502.9 1128.0,510.8 C1124.8,518.7 1121.2,526.5 1116.0,534.4 C1110.8,542.3 1103.3,550.1 1097.0,558.0 C1090.7,565.9 1085.1,573.7 1078.4,581.6 C1071.7,589.5 1064.3,597.3 1057.0,605.2 C1049.7,613.1 1041.8,620.9 1034.7,628.8 C1027.7,636.7 1021.2,644.5 1014.7,652.4 C1008.2,660.3 1000.9,669.7 995.8,676.0 C990.7,682.3 989.1,684.0 984.0,690.0 C978.9,696.0 968.2,708.3 965.0,712.0 L955,712 Z" fill="url(#p9)"/>
<path d="M960,579 L984,581.6 C1000,592 1015,610 1029,623 L1000,690 L960,700 Z" fill="url(#tri)" filter="url(#b1)"/>
<path d="M955.0,392.0 C959.8,390.9 974.5,387.2 984.0,385.2 C993.5,383.2 1002.2,381.1 1012.0,380.2 C1021.8,379.3 1034.0,379.4 1043.0,380.0 C1052.0,380.6 1058.5,382.2 1066.0,384.0 C1073.5,385.8 1080.2,387.2 1087.8,390.5 C1095.4,393.8 1104.3,398.2 1111.4,404.0 C1118.5,409.8 1125.8,418.3 1130.3,425.3 C1134.8,432.3 1137.0,439.6 1138.6,446.0 C1140.2,452.4 1140.4,456.8 1139.8,463.6 C1139.2,470.4 1137.0,479.1 1135.0,487.0 C1133.0,494.9 1131.2,502.9 1128.0,510.8 C1124.8,518.7 1121.2,526.5 1116.0,534.4 C1110.8,542.3 1103.3,550.1 1097.0,558.0 C1090.7,565.9 1085.1,573.7 1078.4,581.6 C1071.7,589.5 1064.3,597.3 1057.0,605.2 C1049.7,613.1 1041.8,620.9 1034.7,628.8 C1027.7,636.7 1021.2,644.5 1014.7,652.4 C1008.2,660.3 1000.9,669.7 995.8,676.0 C990.7,682.3 989.1,684.0 984.0,690.0 C978.9,696.0 968.2,708.3 965.0,712.0" fill="none" stroke="#3c98ff" stroke-width="7" filter="url(#b2)" opacity="0.85"/>
<path d="M955.0,392.0 C959.8,390.9 974.5,387.2 984.0,385.2 C993.5,383.2 1002.2,381.1 1012.0,380.2 C1021.8,379.3 1034.0,379.4 1043.0,380.0 C1052.0,380.6 1058.5,382.2 1066.0,384.0 C1073.5,385.8 1080.2,387.2 1087.8,390.5 C1095.4,393.8 1104.3,398.2 1111.4,404.0 C1118.5,409.8 1125.8,418.3 1130.3,425.3 C1134.8,432.3 1137.0,439.6 1138.6,446.0 C1140.2,452.4 1140.4,456.8 1139.8,463.6 C1139.2,470.4 1137.0,479.1 1135.0,487.0 C1133.0,494.9 1131.2,502.9 1128.0,510.8 C1124.8,518.7 1121.2,526.5 1116.0,534.4 C1110.8,542.3 1103.3,550.1 1097.0,558.0 C1090.7,565.9 1085.1,573.7 1078.4,581.6 C1071.7,589.5 1064.3,597.3 1057.0,605.2 C1049.7,613.1 1041.8,620.9 1034.7,628.8 C1027.7,636.7 1021.2,644.5 1014.7,652.4 C1008.2,660.3 1000.9,669.7 995.8,676.0 C990.7,682.3 989.1,684.0 984.0,690.0 C978.9,696.0 968.2,708.3 965.0,712.0" fill="none" stroke="#6cc0ff" stroke-width="1.8" opacity="0.9"/>
</g>
</svg>
<svg width="60" height="40" viewBox="0 0 60 40" style="left:20px;top:5px">
<defs><linearGradient id="rb" x1="0" y1="0" x2="1" y2="0"><stop offset="0" stop-color="#e4eaf0"/><stop offset="0.5" stop-color="#cfd9e3"/><stop offset="1" stop-color="#e4eaf0"/></linearGradient></defs>
<path d="M6.2,10.5 L49.8,10.5 L48.2,40 L7.8,40 Z" fill="url(#rb)" opacity="0.95"/>
<path d="M6,10.6 L9,5.6 L47,5.6 L50,10.6 Z" fill="#c3d0de" stroke="#e6edf3" stroke-width="0.9" stroke-linejoin="round" opacity="0.95"/>
<path d="M19.5,27.5 l3.2,-5.8 l5.2,0.2 l2.2,3.6 l-3.4,2 l-1.2,-1.8 l-2.2,3.8 Z" fill="#0a6fd2"/>
<path d="M28.5,21.5 l4.6,0.4 l3.6,6.3 l-2.4,3.8 l-4.2,0 l2.6,-4.2 l-2,-3.2 Z" fill="#2196ec"/>
<path d="M19,28.5 l8,1.2 l-0.8,4.3 l-5.2,0 Z" fill="#1280dc"/>
</svg>
<svg width="70" height="40" viewBox="0 0 70 40" style="left:110px;top:0px">
<defs><linearGradient id="eg" x1="0" y1="0.25" x2="1" y2="0.6"><stop offset="0" stop-color="#35b0f6"/><stop offset="0.42" stop-color="#2cc4de"/><stop offset="0.75" stop-color="#46d48a"/><stop offset="1" stop-color="#6ee24a"/></linearGradient>
<clipPath id="ec"><rect x="0" y="0" width="70" height="35"/></clipPath></defs>
<g clip-path="url(#ec)">
<circle cx="35" cy="37" r="30.5" fill="url(#eg)"/>
<path d="M4.8,40 C6,27 16,20.5 26,21.5 C33,22 38,26.5 41,32 C36,29.5 31,31 29,35 L28,40 Z" fill="#1272cc"/>
<path d="M23.5,36 C26,31 33,29.5 37,32.5 L38,36 Z" fill="#86aed0"/>
</g>
</svg>
<div class="t" style="left:10px;top:72px;font-size:15px;color:#fff;text-shadow:1px 1px 1px #000;">R</div>
<svg width="16" height="20" viewBox="0 0 16 20" style="left:0px;top:876px"><path d="M11.9,5.6 L15.6,16.8" stroke="#1a1a1a" stroke-width="1.5" opacity="0.75" stroke-linecap="round"/><path d="M11.1,4.8 L14.8,16" stroke="#fff" stroke-width="1.5" stroke-linecap="round"/></svg>

<div id="panel"></div>
<div id="search"></div>
<div id="sel"></div>
<div id="rpane"></div>
<svg width="20" height="20" viewBox="0 0 20 20" style="left:65px;top:89px"><g fill="none" stroke="#1b1b1b" stroke-width="1.4" stroke-linecap="round"><circle cx="11.9" cy="7.9" r="6.3"/><path d="M7.4,12.4 L1.9,18.3"/></g></svg>
<div class="t" style="left:98.3px;top:90.76px;font-size:18px;color:#1b1b1b;letter-spacing:-0.45px;">cmd</div>
<div class="t" style="left:61px;top:159.76px;font-size:18px;color:#1b1b1b;">All</div>
<div class="t" style="left:111.7px;top:159.76px;font-size:18px;color:#5d5d5d;letter-spacing:-0.8px;">Apps</div>
<div class="t" style="left:181.2px;top:159.76px;font-size:18px;color:#5d5d5d;letter-spacing:-0.15px;">Documents</div>
<div class="t" style="left:301.5px;top:159.76px;font-size:18px;color:#5d5d5d;letter-spacing:-1.1px;">Web</div>
<div class="t" style="left:366.9px;top:159.76px;font-size:18px;color:#5d5d5d;letter-spacing:0.15px;">More</div>
<div class="abs" style="left:64px;top:187px;width:15px;height:4px;border-radius:2px;background:#0067c0"></div>
<svg width="12" height="8" viewBox="0 0 12 8" style="left:415px;top:166px"><path d="M1,1.7 L5.3,6 L9.6,1.7" fill="none" stroke="#5d5d5d" stroke-width="1.2" stroke-linecap="round" stroke-linejoin="round"/></svg>
<div class="abs" style="left:824.8px;top:151.8px;width:25.6px;height:25.6px;border-radius:50%;background:#dddddd;border:1px solid #cfcfcf;box-sizing:content-box"></div>
<div class="t" style="left:832.7px;top:157.26px;font-size:18px;color:#1b1b1b;">C</div>
<svg width="24" height="24" viewBox="0 0 24 24" style="left:875px;top:154px"><g fill="none" stroke="#1b1b1b" stroke-width="1.35" stroke-linejoin="round" stroke-linecap="round">
<circle cx="7.7" cy="9.4" r="2.95"/>
<path d="M3.3,15 H12.2 a0.8,0.8 0 0 1 0.8,0.8 v0.7 c0,2.9 -2.2,4.8 -5.25,4.8 s-5.25,-1.9 -5.25,-4.8 v-0.7 a0.8,0.8 0 0 1 0.8,-0.8 Z"/>
<path d="M13.8,2.6 h5.7 a1.3,1.3 0 0 1 1.3,1.3 v3.7 a1.3,1.3 0 0 1 -1.3,1.3 h-4.1 l-1.9,2.3 l-0.6,-2.4 a1.2,1.2 0 0 1 -0.4,-1.2 v-3.7 a1.3,1.3 0 0 1 1.3,-1.3 Z"/></g></svg>
<svg width="20" height="6" viewBox="0 0 20 6" style="left:922px;top:163px"><g fill="#1b1b1b"><circle cx="3.1" cy="2.8" r="1.45"/><circle cx="9.3" cy="2.8" r="1.45"/><circle cx="15.6" cy="2.8" r="1.45"/></g></svg>
<div class="t" style="left:60.0px;top:229.61px;font-size:17px;color:#1b1b1b;-webkit-text-stroke:0.5px #1b1b1b;letter-spacing:0.25px;">Best match</div>
<div class="abs" style="left:51px;top:289px;width:4px;height:30px;border-radius:2px;background:#0067c0"></div>
<svg width="30" height="24" viewBox="0 0 30 24" style="left:63px;top:291px">
<defs><linearGradient id="cg" x1="0" y1="0" x2="0.7" y2="1"><stop offset="0" stop-color="#4a4a4a"/><stop offset="1" stop-color="#0a0a0a"/></linearGradient></defs>
<rect x="1.3" y="1.3" width="27.3" height="22.1" fill="#000" stroke="#5a5c60" stroke-width="0.7"/>
<path d="M1.6,3.6 H28.3 V9.5 C16,9.5 6,11.5 1.6,14.5 Z" fill="url(#cg)" opacity="0.8"/>
<rect x="1.5" y="1.5" width="26.9" height="2.2" fill="#c3c6cc"/>
<g fill="none" stroke="#f0f0f0" stroke-width="1.1" stroke-linecap="round"><path d="M7.5,7.1 C6.4,6.2 5.3,6.9 5.3,8.9 C5.3,10.9 6.4,11.6 7.5,10.7"/><path d="M13.1,6.5 L15.6,11.5"/></g>
<g fill="#f0f0f0"><rect x="10.1" y="7.4" width="1.2" height="1.2"/><rect x="10.1" y="9.8" width="1.2" height="1.2"/><rect x="18" y="10.7" width="7.7" height="1.1"/></g></svg>
<div class="t" style="left:101.8px;top:282.89px;font-size:17.5px;color:#1b1b1b;letter-spacing:-0.05px;">Command Prompt</div>
<div class="t" style="left:102.9px;top:309.63px;font-size:14.5px;color:#6b6b6b;letter-spacing:0.1px;">App</div>
<div class="t" style="left:61.0px;top:363.61px;font-size:17px;color:#1b1b1b;-webkit-text-stroke:0.5px #1b1b1b;letter-spacing:0.2px;">Apps</div>
<svg width="28" height="22" viewBox="0 0 28 22" style="left:65px;top:413px">
<rect x="1.6" y="1.6" width="23.8" height="17.8" fill="#fdfdfd" stroke="#8e8e8e" stroke-width="1"/>
<rect x="1.1" y="1.1" width="24.8" height="1.7" fill="#74726f"/>
<circle cx="11.5" cy="8.2" r="3.1" fill="#a3abb7"/><circle cx="11.5" cy="8.2" r="3.4" fill="none" stroke="#a3abb7" stroke-width="1.3" stroke-dasharray="1.78 1.78"/>
<circle cx="16.5" cy="14" r="2.1" fill="#3d434b"/><circle cx="16.5" cy="14" r="2.4" fill="none" stroke="#3d434b" stroke-width="1" stroke-dasharray="1.2566 1.2566"/>
<circle cx="11.5" cy="8.2" r="1" fill="#fdfdfd"/><circle cx="16.5" cy="14" r="0.8" fill="#fdfdfd"/></svg>
<div class="t" style="left:102.8px;top:414.41px;font-size:17px;color:#1b1b1b;"><span style="letter-spacing:-0.42px">ResetWUEng</span><span class="sb" style="letter-spacing:0.1px">.cmd</span></div>
<div class="t" style="left:60.8px;top:465.61px;font-size:17px;color:#1b1b1b;-webkit-text-stroke:0.5px #1b1b1b;letter-spacing:0.15px;">Search the web</div>
<svg width="20" height="20" viewBox="0 0 20 20" style="left:69px;top:517px"><g fill="none" stroke="#1b1b1b" stroke-width="1.35" stroke-linecap="round"><circle cx="11.4" cy="7.6" r="6"/><path d="M7.1,11.9 L1.4,17.3"/></g></svg>
<div class="t" style="left:102.7px;top:516.46px;font-size:18px;color:#1b1b1b;letter-spacing:-0.4px;">cmd</div>
<div class="t" style="left:141px;top:519.43px;font-size:14.5px;color:#6b6b6b;letter-spacing:0.08px;">- See web results</div>
<svg width="10" height="14" viewBox="0 0 10 14" style="left:423px;top:518px"><path d="M2.7,2.6 L8.2,7.4 L2.7,12.2" fill="none" stroke="#555" stroke-width="1.55" stroke-linecap="round" stroke-linejoin="round"/></svg>
<svg width="80" height="66" viewBox="0 0 80 66" style="left:671px;top:259px">
<defs><linearGradient id="gl" x1="0" y1="0" x2="1" y2="0.35"><stop offset="0" stop-color="#4a4a4a"/><stop offset="0.5" stop-color="#2a2a2a"/><stop offset="1" stop-color="#141414"/></linearGradient></defs>
<rect x="0.4" y="0.3" width="78.4" height="64.1" fill="#cfd2da"/>
<rect x="0.4" y="0.3" width="78.4" height="3.6" fill="#d8dae0"/>
<rect x="2" y="3.9" width="74.6" height="58.8" fill="#000"/>
<path d="M2,3.9 H76.6 V20 C50,19 20,25 2,38 Z" fill="url(#gl)"/>
<g fill="#bbb"><rect x="5" y="8" width="1.6" height="2.6"/><rect x="7.4" y="8.4" width="0.9" height="0.9"/><path d="M9,8 l1,0 l1.6,2.6 l-1,0 Z"/><rect x="12" y="10" width="2.6" height="0.8"/></g>
</svg>
<div class="t" style="left:470px;width:483px;text-align:center;top:357.95px;font-size:22.5px;color:#1b1b1b;letter-spacing:0.15px">Command Prompt</div>
<div class="t" style="left:470px;width:483px;text-align:center;top:390.70px;font-size:15px;color:#6b6b6b;letter-spacing:0.2px">App</div>
<div class="abs" style="left:491px;top:444px;width:442px;height:1px;background:#e2e2e2"></div>
<div class="t" style="left:540.5px;top:514.30px;font-size:15px;color:#1b1b1b;letter-spacing:0.02px;">Run as administrator</div>
<div class="t" style="left:540.5px;top:554.30px;font-size:15px;color:#1b1b1b;letter-spacing:0.25px;">Open file location</div>
<div class="t" style="left:540.5px;top:594.30px;font-size:15px;color:#1b1b1b;">Pin to Start</div>
<div class="t" style="left:540.5px;top:634.30px;font-size:15px;color:#1b1b1b;">Pin to taskbar</div>
<svg width="18.5" height="18.5" viewBox="0 0 20 20" style="left:505px;top:511px"><g fill="none" stroke="#0f6cbd" stroke-width="1.35" stroke-linejoin="round" stroke-linecap="round">
<rect x="1.3" y="0.9" width="15.9" height="16.2" rx="2.8"/><path d="M1.3,4.8 H17.2"/></g>
<path d="M14.15,4.9 c1.6,1.3 3.6,1.9 6.1,2 v5.4 c0,3.3 -2.3,5.6 -6.1,6.9 c-3.8,-1.3 -6.1,-3.6 -6.1,-6.9 v-5.4 c2.5,-0.1 4.5,-0.7 6.1,-2 Z" fill="#fbfbfb"/>
<path d="M14.15,6.6 c1.4,1.1 3,1.6 4.9,1.7 v4.6 c0,2.8 -1.9,4.7 -4.9,5.8 c-3,-1.1 -4.9,-3 -4.9,-5.8 v-4.6 c1.9,-0.1 3.5,-0.6 4.9,-1.7 Z" fill="#0f6cbd"/></svg>
<svg width="18.5" height="18.5" viewBox="0 0 20 20" style="left:505px;top:552px"><g fill="none" stroke="#0f6cbd" stroke-width="1.35" stroke-linejoin="round" stroke-linecap="round">
<path d="M0.9,14.8 V2.9 a2.2,2.2 0 0 1 2.2,-2.2 h3.8 a2,2 0 0 1 1.4,0.6 l2.1,2.3 h5.7 a2.2,2.2 0 0 1 2.2,2.2 V6"/>
<path d="M1.1,16 l2.5,-8.5 a2.4,2.4 0 0 1 2.3,-1.8 h12 a1.45,1.45 0 0 1 1.4,1.85 l-2,7.9 a2.4,2.4 0 0 1 -2.3,1.8 H2.6 a1.5,1.5 0 0 1 -1.5,-1.25 Z"/></g></svg>
<svg width="18.5" height="19.43" viewBox="0 0 20 21" style="left:505px;top:590px"><g fill="none" stroke="#0f6cbd" stroke-width="1.35" stroke-linejoin="round" stroke-linecap="round">
<path d="M11.7,0.8 L19.7,8.6 C17,9.2 15,10.2 13.2,11.4 L10.9,18.5 L2,9.8 C4.4,9.5 6.4,8.6 8.3,7.3 Z"/><path d="M6.3,14.2 L0.5,19.9"/></g></svg>
<svg width="18.5" height="19.43" viewBox="0 0 20 21" style="left:505px;top:630px"><g fill="none" stroke="#0f6cbd" stroke-width="1.35" stroke-linejoin="round" stroke-linecap="round">
<path d="M11.7,0.8 L19.7,8.6 C17,9.2 15,10.2 13.2,11.4 L10.9,18.5 L2,9.8 C4.4,9.5 6.4,8.6 8.3,7.3 Z"/><path d="M6.3,14.2 L0.5,19.9"/></g></svg>

<div id="menu"></div>
<div id="hov"></div>
<svg width="20" height="20" viewBox="0 0 20 20" style="left:405.5px;top:333px"><g fill="none" stroke="#1f1f1f" stroke-width="1.35" stroke-linejoin="round" stroke-linecap="round">
<rect x="1.3" y="0.9" width="15.9" height="16.2" rx="2.8"/><path d="M1.3,4.8 H17.2"/></g>
<path d="M14.15,4.9 c1.6,1.3 3.6,1.9 6.1,2 v5.4 c0,3.3 -2.3,5.6 -6.1,6.9 c-3.8,-1.3 -6.1,-3.6 -6.1,-6.9 v-5.4 c2.5,-0.1 4.5,-0.7 6.1,-2 Z" fill="#f3f3f3"/>
<path d="M14.15,6.6 c1.4,1.1 3,1.6 4.9,1.7 v4.6 c0,2.8 -1.9,4.7 -4.9,5.8 c-3,-1.1 -4.9,-3 -4.9,-5.8 v-4.6 c1.9,-0.1 3.5,-0.6 4.9,-1.7 Z" fill="#1f1f1f"/></svg>
<svg width="20" height="20" viewBox="0 0 20 20" style="left:405px;top:381px"><g fill="none" stroke="#1f1f1f" stroke-width="1.35" stroke-linejoin="round" stroke-linecap="round">
<path d="M0.9,14.8 V2.9 a2.2,2.2 0 0 1 2.2,-2.2 h3.8 a2,2 0 0 1 1.4,0.6 l2.1,2.3 h5.7 a2.2,2.2 0 0 1 2.2,2.2 V6"/>
<path d="M1.1,16 l2.5,-8.5 a2.4,2.4 0 0 1 2.3,-1.8 h12 a1.45,1.45 0 0 1 1.4,1.85 l-2,7.9 a2.4,2.4 0 0 1 -2.3,1.8 H2.6 a1.5,1.5 0 0 1 -1.5,-1.25 Z"/></g></svg>
<svg width="20" height="21.00" viewBox="0 0 20 21" style="left:405px;top:427.5px"><g fill="none" stroke="#1f1f1f" stroke-width="1.35" stroke-linejoin="round" stroke-linecap="round">
<path d="M11.7,0.8 L19.7,8.6 C17,9.2 15,10.2 13.2,11.4 L10.9,18.5 L2,9.8 C4.4,9.5 6.4,8.6 8.3,7.3 Z"/><path d="M6.3,14.2 L0.5,19.9"/></g></svg>
<svg width="20" height="21.00" viewBox="0 0 20 21" style="left:405px;top:474.5px"><g fill="none" stroke="#1f1f1f" stroke-width="1.35" stroke-linejoin="round" stroke-linecap="round">
<path d="M11.7,0.8 L19.7,8.6 C17,9.2 15,10.2 13.2,11.4 L10.9,18.5 L2,9.8 C4.4,9.5 6.4,8.6 8.3,7.3 Z"/><path d="M6.3,14.2 L0.5,19.9"/></g></svg>
<div class="t" style="left:440.6px;top:334.61px;font-size:17px;color:#1b1b1b;letter-spacing:0.1px;">Run as administrator</div>
<div class="t" style="left:440.6px;top:381.61px;font-size:17px;color:#1b1b1b;letter-spacing:0.27px;">Open file location</div>
<div class="t" style="left:440.6px;top:429.11px;font-size:17px;color:#1b1b1b;letter-spacing:0.1px;">Pin to Start</div>
<div class="t" style="left:440.6px;top:476.11px;font-size:17px;color:#1b1b1b;letter-spacing:0.1px;">Pin to taskbar</div>

<svg width="40" height="130" viewBox="0 0 40 130" style="left:520px;top:195px"><path d="M34.4,9.4 L18.8,97.2" stroke="#0000ff" stroke-width="3" fill="none"/><path d="M11.4,96 L26.1,98.5 L13.3,125.6 Z" fill="#0000ff"/></svg>
<div id="taskbar"></div>
<div id="sbtn"></div>
<svg width="30" height="30" viewBox="0 0 30 30" style="left:26.6px;top:972.6px">
<defs><linearGradient id="wl" x1="0" y1="0" x2="1" y2="1"><stop offset="0" stop-color="#58ccff"/><stop offset="0.5" stop-color="#1f9cf0"/><stop offset="1" stop-color="#0a78d4"/></linearGradient></defs>
<path d="M1.4,0.2 H13.9 V13.9 H0.2 V1.4 A1.2,1.2 0 0 1 1.4,0.2 Z M15.5,0.2 H28 A1.2,1.2 0 0 1 29.2,1.4 V13.9 H15.5 Z M0.2,15.5 H13.9 V29.2 H1.4 A1.2,1.2 0 0 1 0.2,28 Z M15.5,15.5 H29.2 V28 A1.2,1.2 0 0 1 28,29.2 H15.5 Z" fill="url(#wl)"/></svg>
<svg width="34" height="34" viewBox="0 0 34 34" style="left:82px;top:970px">
<defs><linearGradient id="sg" x1="0" y1="0" x2="1" y2="0"><stop offset="0" stop-color="#0a64cc"/><stop offset="0.55" stop-color="#1379d6"/><stop offset="0.85" stop-color="#2bbf9a"/><stop offset="1" stop-color="#46dc78"/></linearGradient></defs>
<circle cx="16.7" cy="15.2" r="11.4" fill="none" stroke="url(#sg)" stroke-width="2.9"/>
<path d="M8.4,24.2 L2.7,30.1" stroke="#0a68d2" stroke-width="3.5" stroke-linecap="round"/></svg>
<svg width="32" height="30" viewBox="0 0 32 30" style="left:136px;top:972px">
<defs><linearGradient id="tv1" x1="0" y1="0" x2="0" y2="1"><stop offset="0" stop-color="#4a4a4a"/><stop offset="1" stop-color="#1e1e1e"/></linearGradient>
<linearGradient id="tv2" x1="0" y1="0" x2="1" y2="1"><stop offset="0" stop-color="#ffffff"/><stop offset="1" stop-color="#dedede"/></linearGradient></defs>
<rect x="1" y="9" width="22.4" height="19.8" rx="2.2" fill="url(#tv1)"/>
<rect x="8.5" y="0.8" width="22.3" height="19.4" rx="1.8" fill="url(#tv2)" stroke="#e4e4e4" stroke-width="0.5"/>
<path d="M8.5,9 H23.4 V20.2 H10.3 A1.8,1.8 0 0 1 8.5,18.4 Z" fill="#b4b4b4"/>
</svg>
<svg width="31" height="29" viewBox="0 0 31 29" style="left:192px;top:973px">
<defs><linearGradient id="wg" x1="0" y1="0" x2="0" y2="1"><stop offset="0" stop-color="#1464c4"/><stop offset="1" stop-color="#0a50a4"/></linearGradient>
<linearGradient id="wg2" x1="0" y1="0" x2="0" y2="1"><stop offset="0" stop-color="#ffffff"/><stop offset="1" stop-color="#e6e6e6"/></linearGradient></defs>
<rect x="0.2" y="0.1" width="29.8" height="27.2" rx="2" fill="url(#wg)"/>
<rect x="2.6" y="2.5" width="11" height="22.5" rx="1.4" fill="url(#wg2)"/>
<rect x="16" y="2.5" width="11.8" height="12.5" rx="0.8" fill="#5ccbff"/>
<rect x="16" y="15.6" width="11.8" height="4.4" fill="#1f9dff"/>
<rect x="16" y="20.6" width="11.8" height="4.4" rx="0.8" fill="#0e82f2"/>
</svg>
<svg width="32" height="32" viewBox="0 0 32 32" style="left:246px;top:971px">
<defs><linearGradient id="ch" x1="0.3" y1="0" x2="0.6" y2="1"><stop offset="0" stop-color="#9488d6"/><stop offset="0.5" stop-color="#6f6fcd"/><stop offset="1" stop-color="#4a50c0"/></linearGradient></defs>
<circle cx="15.5" cy="15.4" r="14.2" fill="url(#ch)"/>
<path d="M3.6,23 L1.6,29.2 L9.5,28 Z" fill="#5257c2" stroke="#5257c2" stroke-width="0.8" stroke-linejoin="round"/>
<rect x="7" y="10.2" width="13.2" height="10.8" rx="2.2" fill="#fff"/>
<path d="M21,13.6 L24,11.6 V19.6 L21,17.6 Z" fill="#fff" stroke="#fff" stroke-width="0.8" stroke-linejoin="round"/>
</svg>
<svg width="30" height="30" viewBox="-15 -15 30 30" style="left:301.7px;top:971.5px">
<circle r="13.7" fill="#fbc116"/>
<path d="M0,0 L-11.86,-6.85 A13.7,13.7 0 0 1 11.86,-6.85 Z" fill="#db4437"/>
<path d="M0,-6.5 H12 A13.7,13.7 0 0 0 -11.86,-6.85 L-5.6,3.2 Z" fill="#db4437"/>
<path d="M-11.86,-6.85 A13.7,13.7 0 0 0 0,13.7 L5.7,3.2 L-5.6,3.2 Z" fill="#0f9d58"/>
<path d="M-11.86,-6.85 L-5.63,3.25 A6.5,6.5 0 0 1 -5.63,-3.25 Z" fill="#0f9d58"/>
<path d="M0,13.7 A13.7,13.7 0 0 0 12,-6.5 H0 L5.63,3.25 Z" fill="#fbc116"/>
<circle r="6.6" fill="#f4f4f4"/>
<circle r="5.2" fill="#4a8af4"/>
</svg>
<svg width="32" height="28" viewBox="0 0 32 28" style="left:356px;top:973px">
<defs><linearGradient id="fx" x1="0" y1="0" x2="0" y2="1"><stop offset="0" stop-color="#ffd865"/><stop offset="1" stop-color="#f7b92c"/></linearGradient>
<linearGradient id="fb" x1="0" y1="0" x2="0" y2="1"><stop offset="0" stop-color="#2a8fe6"/><stop offset="1" stop-color="#0f6ec6"/></linearGradient></defs>
<path d="M0.9,2.6 A1.6,1.6 0 0 1 2.5,1 H10 L12.8,3.8 H29.4 A1.5,1.5 0 0 1 30.9,5.3 V10 H0.9 Z" fill="#e5a81a"/>
<path d="M0.9,6 H11 L13.2,4 H29.6 A1.3,1.3 0 0 1 30.9,5.3 V26.9 H0.9 Z" fill="url(#fx)"/>
<path d="M6,26.9 V22.2 A2.2,2.2 0 0 1 8.2,20 H23.7 A2.2,2.2 0 0 1 25.9,22.2 V26.9 Z" fill="url(#fb)"/>
<rect x="9" y="23" width="14" height="1.3" rx="0.6" fill="#0a57a8"/>
</svg>
<svg width="32" height="32" viewBox="0 0 32 32" style="left:411px;top:972px">
<defs><linearGradient id="st" x1="0" y1="0" x2="0.6" y2="1"><stop offset="0" stop-color="#1c559e"/><stop offset="1" stop-color="#213268"/></linearGradient></defs>
<path d="M8.9,7 V2.3 A1.2,1.2 0 0 1 10.1,1.1 H21.7 A1.2,1.2 0 0 1 22.9,2.3 V7" fill="none" stroke="#3cc3f6" stroke-width="1.7"/>
<path d="M0.9,5 H29.9 V25.2 A4.6,4.6 0 0 1 25.3,29.8 H5.5 A4.6,4.6 0 0 1 0.9,25.2 Z" fill="url(#st)"/>
<rect x="9.8" y="12" width="5.2" height="5.2" fill="#f25022"/><rect x="15.8" y="12" width="5.2" height="5.2" fill="#7fba00"/>
<rect x="9.8" y="18" width="5.2" height="5.2" fill="#00a4ef"/><rect x="15.8" y="18" width="5.2" height="5.2" fill="#ffb900"/>
</svg>
<svg width="32" height="30" viewBox="0 0 32 30" style="left:466px;top:972px">
<defs><linearGradient id="ml" x1="0" y1="0" x2="1" y2="1"><stop offset="0" stop-color="#3cc2f4"/><stop offset="1" stop-color="#1a8ee0"/></linearGradient>
<linearGradient id="ml2" x1="0" y1="0" x2="0" y2="1"><stop offset="0" stop-color="#0e66b4"/><stop offset="1" stop-color="#0a4c8e"/></linearGradient>
<linearGradient id="ml3" x1="0" y1="0" x2="0" y2="1"><stop offset="0" stop-color="#ffffff"/><stop offset="1" stop-color="#d4d8dc"/></linearGradient></defs>
<path d="M15.8,0.8 L30.9,9.6 V14 H0.9 V9.6 Z" fill="url(#ml2)"/>
<path d="M3.4,10 H28.4 V20 H3.4 Z" fill="url(#ml3)"/>
<path d="M0.9,10 L15.9,19 L30.9,10 V28.8 H0.9 Z" fill="url(#ml)"/>
<path d="M0.9,10 L15.9,19 L30.9,28.8 H0.9 Z" fill="#1e96e4" opacity="0.55"/>
</svg>

</body>
</html>
